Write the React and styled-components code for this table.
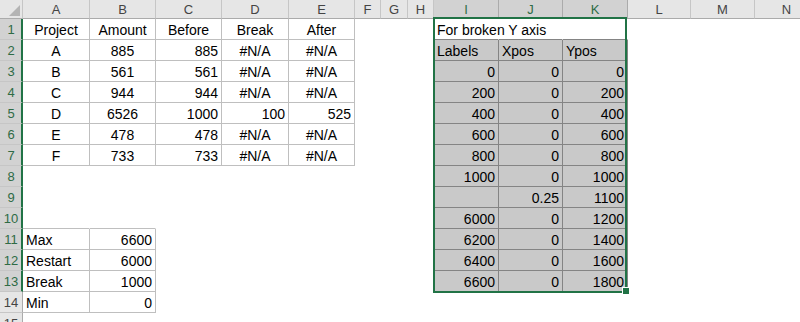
import React from 'react';
import styled, { createGlobalStyle } from 'styled-components';

const GREEN = '#217346';

const GlobalStyle = createGlobalStyle`
	html, body {
		margin: 0;
		padding: 0;
		background: #fff;
		overflow: hidden;
	}
	body {
		font-family: "Liberation Sans", Arial, sans-serif;
	}
`;

const colNames = ['A', 'B', 'C', 'D', 'E', 'F', 'G', 'H', 'I', 'J', 'K', 'L', 'M', 'N'];
const colWidths = [67, 66, 66, 67, 66, 26, 27, 26, 65, 64, 65, 63, 64, 64];
const selCols = ['I', 'J', 'K'];
const selRows = 13;
const rowCount = 15;

// cell values: [text, align]
const data = {
	1: { A: ['Project', 'c'], B: ['Amount', 'c'], C: ['Before', 'c'], D: ['Break', 'c'], E: ['After', 'c'], I: ['For broken Y axis', 'l'] },
	2: { A: ['A', 'c'], B: ['885', 'c'], C: ['885', 'r'], D: ['#N/A', 'c'], E: ['#N/A', 'c'], I: ['Labels', 'l'], J: ['Xpos', 'l'], K: ['Ypos', 'l'] },
	3: { A: ['B', 'c'], B: ['561', 'c'], C: ['561', 'r'], D: ['#N/A', 'c'], E: ['#N/A', 'c'], I: ['0', 'r'], J: ['0', 'r'], K: ['0', 'r'] },
	4: { A: ['C', 'c'], B: ['944', 'c'], C: ['944', 'r'], D: ['#N/A', 'c'], E: ['#N/A', 'c'], I: ['200', 'r'], J: ['0', 'r'], K: ['200', 'r'] },
	5: { A: ['D', 'c'], B: ['6526', 'c'], C: ['1000', 'r'], D: ['100', 'r'], E: ['525', 'r'], I: ['400', 'r'], J: ['0', 'r'], K: ['400', 'r'] },
	6: { A: ['E', 'c'], B: ['478', 'c'], C: ['478', 'r'], D: ['#N/A', 'c'], E: ['#N/A', 'c'], I: ['600', 'r'], J: ['0', 'r'], K: ['600', 'r'] },
	7: { A: ['F', 'c'], B: ['733', 'c'], C: ['733', 'r'], D: ['#N/A', 'c'], E: ['#N/A', 'c'], I: ['800', 'r'], J: ['0', 'r'], K: ['800', 'r'] },
	8: { I: ['1000', 'r'], J: ['0', 'r'], K: ['1000', 'r'] },
	9: { J: ['0.25', 'r'], K: ['1100', 'r'] },
	10: { I: ['6000', 'r'], J: ['0', 'r'], K: ['1200', 'r'] },
	11: { A: ['Max', 'l'], B: ['6600', 'r'], I: ['6200', 'r'], J: ['0', 'r'], K: ['1400', 'r'] },
	12: { A: ['Restart', 'l'], B: ['6000', 'r'], I: ['6400', 'r'], J: ['0', 'r'], K: ['1600', 'r'] },
	13: { A: ['Break', 'l'], B: ['1000', 'r'], I: ['6600', 'r'], J: ['0', 'r'], K: ['1800', 'r'] },
	14: { A: ['Min', 'l'], B: ['0', 'r'] },
};

// which border style a cell carries
const region = (r, ci) => {
	if (r >= 1 && r <= 7 && ci >= 0 && ci <= 4) return 'light';
	if (r >= 11 && r <= 14 && ci >= 0 && ci <= 1) return 'light';
	if (r >= 2 && r <= 13 && ci >= 8 && ci <= 10) return 'gray';
	return null;
};

const edge = (a, b) => {
	if (a === 'gray' || b === 'gray') return '#848484';
	if (a === 'light' || b === 'light') return '#bfbfbf';
	return 'transparent';
};

const Sheet = styled.div`
	position: relative;
	display: grid;
	grid-template-columns: 23px ${colWidths.map(w => w + 'px').join(' ')};
	grid-template-rows: 19px repeat(${rowCount}, 21px);
	width: max-content;
`;

const Corner = styled.div`
	box-sizing: border-box;
	background: #e6e6e6;
	border-right: 1px solid #c6c6c6;
	border-bottom: 1px solid #ababab;
	display: flex;
	align-items: flex-end;
	justify-content: flex-end;
	padding: 0 2px 2px 0;
	svg {
		display: block;
	}
`;

const ColHead = styled.div`
	box-sizing: border-box;
	background: ${p => (p.$sel ? '#d2d2d2' : '#e6e6e6')};
	color: ${p => (p.$sel ? '#2e6b45' : '#444')};
	border-right: 1px solid ${p => (p.$sel ? '#ababab' : '#c6c6c6')};
	border-bottom: 1px solid #ababab;
	font-size: 13px;
	line-height: 15px;
	display: flex;
	align-items: center;
	justify-content: center;
	padding-top: 1px;
`;

const RowHead = styled.div`
	box-sizing: border-box;
	background: ${p => (p.$sel ? '#d2d2d2' : '#e6e6e6')};
	color: ${p => (p.$sel ? '#2e6b45' : '#444')};
	border-right: ${p => (p.$sel ? `2px solid ${GREEN}` : '1px solid #ababab')};
	border-bottom: 1px solid #c6c6c6;
	font-size: 13px;
	line-height: 15px;
	display: flex;
	align-items: flex-end;
	justify-content: center;
	padding: 0 0 2px ${p => (p.$sel ? '1px' : '0')};
`;

const Cell = styled.div`
	box-sizing: border-box;
	background: ${p => (p.$fill ? '#c9c9c9' : 'transparent')};
	border-right: 1px solid ${p => p.$br};
	border-bottom: 1px solid ${p => p.$bb};
	color: #000;
	font-size: 14px;
	line-height: 16px;
	display: flex;
	align-items: flex-end;
	justify-content: ${p => ({ l: 'flex-start', c: 'center', r: 'flex-end' }[p.$align] || 'flex-start')};
	padding: 0 3px 1px 3px;
	white-space: nowrap;
	overflow: ${p => (p.$spill ? 'visible' : 'hidden')};
`;

const Selection = styled.div`
	position: absolute;
	left: 433px;
	top: 17px;
	width: 194px;
	height: 276px;
	box-sizing: border-box;
	border: 2px solid ${GREEN};
	pointer-events: none;
`;

const FillHandle = styled.div`
	position: absolute;
	left: 623px;
	top: 288px;
	width: 6px;
	height: 6px;
	box-sizing: border-box;
	background: ${GREEN};
	outline: 1px solid #fff;
`;

export default function App() {
	const cells = [];

	cells.push(
		<Corner key="corner">
			<svg width="11" height="11" viewBox="0 0 11 11">
				<polygon points="11,0 11,11 0,11" fill="#b4b4b4" />
			</svg>
		</Corner>
	);
	colNames.forEach(c => {
		cells.push(
			<ColHead key={'h' + c} $sel={selCols.includes(c)}>
				{c}
			</ColHead>
		);
	});

	for (let r = 1; r <= rowCount; r++) {
		cells.push(
			<RowHead key={'r' + r} $sel={r <= selRows}>
				{r}
			</RowHead>
		);
		colNames.forEach((c, ci) => {
			const val = (data[r] || {})[c];
			const reg = region(r, ci);
			cells.push(
				<Cell
					key={c + r}
					$align={val ? val[1] : 'l'}
					$fill={reg === 'gray'}
					$br={edge(reg, region(r, ci + 1))}
					$bb={edge(reg, region(r + 1, ci))}
					$spill={c === 'I' && r === 1}
				>
					{val ? val[0] : ''}
				</Cell>
			);
		});
	}

	return (
		<>
			<GlobalStyle />
			<Sheet>
				{cells}
				<Selection />
				<FillHandle />
			</Sheet>
		</>
	);
}
